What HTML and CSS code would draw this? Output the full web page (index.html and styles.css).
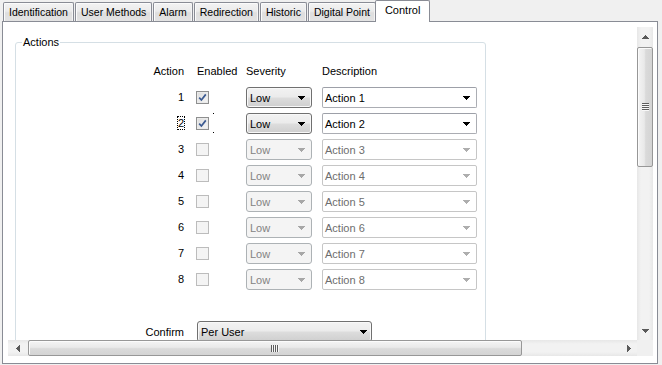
FILE: index.html
```html
<!DOCTYPE html>
<html>
<head>
<meta charset="utf-8">
<link rel="stylesheet" href="styles.css">
</head>
<body>
<div class="tabs">
  <div class="tab">Identification</div>
  <div class="tab">User Methods</div>
  <div class="tab">Alarm</div>
  <div class="tab">Redirection</div>
  <div class="tab">Historic</div>
  <div class="tab">Digital Point</div>
  <div class="tab active">Control</div>
</div>
<div class="panel">
  <div class="viewport">
    <div class="content">
      <fieldset class="group">
        <legend>Actions</legend>
        <div class="grid">
          <div class="hdr num">Action</div>
          <div class="hdr en">Enabled</div>
          <div class="hdr">Severity</div>
          <div class="hdr">Description</div>

          <div class="num">1</div>
          <div class="cbcell"><span class="cb on"><svg width="11" height="11" viewBox="0 0 11 11"><path d="M2.2 5.6 L4.4 8 L8.8 2.4" fill="none" stroke="#3b5a91" stroke-width="1.7"/></svg></span></div>
          <div class="combo sev"><span class="val">Low</span><svg class="arr" width="7" height="4" viewBox="0 0 7 4"><path d="M0 0h7v1h-1v1h-1v1h-1v1h-1v-1h-1v-1h-1v-1h-1z"/></svg></div>
          <div class="combo desc"><span class="val">Action 1</span><svg class="arr" width="7" height="4" viewBox="0 0 7 4"><path d="M0 0h7v1h-1v1h-1v1h-1v1h-1v-1h-1v-1h-1v-1h-1z"/></svg></div>

          <div class="num"><span class="focus">2</span></div>
          <div class="cbcell"><span class="cb on"><svg width="11" height="11" viewBox="0 0 11 11"><path d="M2.2 5.6 L4.4 8 L8.8 2.4" fill="none" stroke="#3b5a91" stroke-width="1.7"/></svg></span><span class="dots"></span></div>
          <div class="combo sev"><span class="val">Low</span><svg class="arr" width="7" height="4" viewBox="0 0 7 4"><path d="M0 0h7v1h-1v1h-1v1h-1v1h-1v-1h-1v-1h-1v-1h-1z"/></svg></div>
          <div class="combo desc"><span class="val">Action 2</span><svg class="arr" width="7" height="4" viewBox="0 0 7 4"><path d="M0 0h7v1h-1v1h-1v1h-1v1h-1v-1h-1v-1h-1v-1h-1z"/></svg></div>

          <div class="num">3</div>
          <div class="cbcell"><span class="cb dis"></span></div>
          <div class="combo sev dis"><span class="val">Low</span><svg class="arr" width="7" height="4" viewBox="0 0 7 4"><path d="M0 0h7v1h-1v1h-1v1h-1v1h-1v-1h-1v-1h-1v-1h-1z"/></svg></div>
          <div class="combo desc dis"><span class="val">Action 3</span><svg class="arr" width="7" height="4" viewBox="0 0 7 4"><path d="M0 0h7v1h-1v1h-1v1h-1v1h-1v-1h-1v-1h-1v-1h-1z"/></svg></div>

          <div class="num">4</div>
          <div class="cbcell"><span class="cb dis"></span></div>
          <div class="combo sev dis"><span class="val">Low</span><svg class="arr" width="7" height="4" viewBox="0 0 7 4"><path d="M0 0h7v1h-1v1h-1v1h-1v1h-1v-1h-1v-1h-1v-1h-1z"/></svg></div>
          <div class="combo desc dis"><span class="val">Action 4</span><svg class="arr" width="7" height="4" viewBox="0 0 7 4"><path d="M0 0h7v1h-1v1h-1v1h-1v1h-1v-1h-1v-1h-1v-1h-1z"/></svg></div>

          <div class="num">5</div>
          <div class="cbcell"><span class="cb dis"></span></div>
          <div class="combo sev dis"><span class="val">Low</span><svg class="arr" width="7" height="4" viewBox="0 0 7 4"><path d="M0 0h7v1h-1v1h-1v1h-1v1h-1v-1h-1v-1h-1v-1h-1z"/></svg></div>
          <div class="combo desc dis"><span class="val">Action 5</span><svg class="arr" width="7" height="4" viewBox="0 0 7 4"><path d="M0 0h7v1h-1v1h-1v1h-1v1h-1v-1h-1v-1h-1v-1h-1z"/></svg></div>

          <div class="num">6</div>
          <div class="cbcell"><span class="cb dis"></span></div>
          <div class="combo sev dis"><span class="val">Low</span><svg class="arr" width="7" height="4" viewBox="0 0 7 4"><path d="M0 0h7v1h-1v1h-1v1h-1v1h-1v-1h-1v-1h-1v-1h-1z"/></svg></div>
          <div class="combo desc dis"><span class="val">Action 6</span><svg class="arr" width="7" height="4" viewBox="0 0 7 4"><path d="M0 0h7v1h-1v1h-1v1h-1v1h-1v-1h-1v-1h-1v-1h-1z"/></svg></div>

          <div class="num">7</div>
          <div class="cbcell"><span class="cb dis"></span></div>
          <div class="combo sev dis"><span class="val">Low</span><svg class="arr" width="7" height="4" viewBox="0 0 7 4"><path d="M0 0h7v1h-1v1h-1v1h-1v1h-1v-1h-1v-1h-1v-1h-1z"/></svg></div>
          <div class="combo desc dis"><span class="val">Action 7</span><svg class="arr" width="7" height="4" viewBox="0 0 7 4"><path d="M0 0h7v1h-1v1h-1v1h-1v1h-1v-1h-1v-1h-1v-1h-1z"/></svg></div>

          <div class="num">8</div>
          <div class="cbcell"><span class="cb dis"></span></div>
          <div class="combo sev dis"><span class="val">Low</span><svg class="arr" width="7" height="4" viewBox="0 0 7 4"><path d="M0 0h7v1h-1v1h-1v1h-1v1h-1v-1h-1v-1h-1v-1h-1z"/></svg></div>
          <div class="combo desc dis"><span class="val">Action 8</span><svg class="arr" width="7" height="4" viewBox="0 0 7 4"><path d="M0 0h7v1h-1v1h-1v1h-1v1h-1v-1h-1v-1h-1v-1h-1z"/></svg></div>
        </div>
        <div class="confirm">
          <div class="num">Confirm</div>
          <div class="combo sev wide"><span class="val">Per User</span><svg class="arr" width="7" height="4" viewBox="0 0 7 4"><path d="M0 0h7v1h-1v1h-1v1h-1v1h-1v-1h-1v-1h-1v-1h-1z"/></svg></div>
        </div>
      </fieldset>
    </div>
    <div class="vscroll">
      <div class="sbtn up"><svg width="7" height="4" viewBox="0 0 7 4"><path d="M3 0h1v1h1v1h1v1h1v1h-7v-1h1v-1h1v-1h1z"/></svg></div>
      <div class="vthumb"><span class="vgrip"></span></div>
      <div class="strack"></div>
      <div class="sbtn down"><svg width="7" height="4" viewBox="0 0 7 4"><path d="M0 0h7v1h-1v1h-1v1h-1v1h-1v-1h-1v-1h-1v-1h-1z"/></svg></div>
    </div>
    <div class="hscroll">
      <div class="sbtn left"><svg width="4" height="7" viewBox="0 0 4 7"><path d="M3 0h1v7h-1v-1h-1v-1h-1v-1h-1v-1h1v-1h1v-1h1z"/></svg></div>
      <div class="hthumb"><span class="hgrip"></span></div>
      <div class="strack"></div>
      <div class="sbtn right"><svg width="4" height="7" viewBox="0 0 4 7"><path d="M0 0h1v1h1v1h1v1h1v1h-1v1h-1v1h-1v1h-1z"/></svg></div>
    </div>
    <div class="corner"></div>
  </div>
</div>
</body>
</html>
```
FILE: styles.css
```css
html, body {
  margin: 0;
  padding: 0;
}
body {
  background: #f0f0f0;
  font-family: "Liberation Sans", Arial, sans-serif;
  font-size: 11px;
  color: #000;
  width: 662px;
  height: 365px;
  overflow: hidden;
}

/* Tabs */
.tabs {
  display: flex;
  align-items: flex-end;
  height: 22px;
  padding-left: 3px;
  margin-bottom: -1px;
  position: relative;
  z-index: 1;
}
.tab {
  box-sizing: border-box;
  height: 19px;
  margin-bottom: 1px;
  margin-right: 1px;
  padding: 0 5px;
  display: flex;
  align-items: center;
  border: 1px solid #898c95;
  border-bottom: none;
  border-radius: 2px 2px 0 0;
  background: linear-gradient(#f3f3f3, #ebebeb 45%, #dedede 55%, #e3e3e3);
  box-shadow: inset 1px 1px 0 #fbfbfb, inset -1px 0 0 #f4f4f4;
  white-space: nowrap;
  font-size: 10.5px;
}
.tab.active {
  height: 22px;
  margin-bottom: 0;
  margin-left: -2px;
  padding: 0 9px 3px;
  background: #fff;
  box-shadow: none;
  font-size: 11px;
}

/* Panel */
.panel {
  box-sizing: border-box;
  margin-left: 2px;
  width: 656px;
  height: 343px;
  border: 1px solid #898c95;
  background: #fff;
  padding: 5px 4px 7px 5px;
}
.viewport {
  height: 100%;
  display: grid;
  grid-template-columns: 1fr 16px;
  grid-template-rows: 1fr 16px;
}
.content {
  overflow: hidden;
  background: #fff;
  min-width: 0;
  min-height: 0;
}

/* Group box */
.group {
  box-sizing: border-box;
  margin: 9px 0 0 7px;
  width: 471px;
  height: 420px;
  padding: 0;
  border: 1px solid #d5dfe5;
  border-radius: 3px;
  min-width: 0;
}
.group legend {
  margin-left: 6px;
  padding: 0 1px;
  line-height: 13px;
}

.grid {
  margin-top: 9px;
  display: grid;
  grid-template-columns: 168px 62px 76px 155px;
  grid-auto-rows: 26px;
  align-items: center;
}
.num {
  text-align: right;
}
.hdr.en {
  padding-left: 13px;
}
.focus {
  outline: 1px dotted #000;
  outline-offset: 0;
}

/* Checkboxes */
.cbcell {
  padding-left: 12px;
  height: 26px;
  display: flex;
  align-items: center;
  position: relative;
}
.cb {
  box-sizing: border-box;
  width: 13px;
  height: 13px;
  display: flex;
  align-items: center;
  justify-content: center;
}
.cb.on {
  border: 1px solid #8e8f8f;
  background: linear-gradient(135deg, #dcdcdc, #f6f6f6);
  box-shadow: inset 0 0 0 1px #eaeaea;
}
.cb.dis {
  border: 1px solid #bcbcbc;
  background: #f4f4f4;
}
.dots {
  position: absolute;
  left: 29px;
  top: 3px;
  width: 1px;
  height: 1px;
  background: #000;
  box-shadow: 0 19px 0 #000;
}

/* Combos */
.combo {
  box-sizing: border-box;
  height: 21px;
  align-self: start;
  margin-top: 3px;
  display: flex;
  align-items: center;
  white-space: nowrap;
}
.combo .val {
  flex: 1;
}
.combo .arr {
  fill: #000;
}
.sev {
  width: 66px;
  padding-left: 3px;
  border: 1px solid #707070;
  border-radius: 3px;
  background: linear-gradient(#f2f2f2, #ebebeb 48%, #dddddd 52%, #cfcfcf);
  box-shadow: inset 0 0 0 1px #f8f8f8;
}
.sev .arr {
  margin-right: 6px;
}
.sev.dis {
  border-color: #adb2b5;
  background: #f4f4f4;
  box-shadow: none;
  color: #838383;
}
.sev.dis .arr {
  fill: #a7a7a7;
}
.desc {
  width: 155px;
  padding-left: 2px;
  border: 1px solid #abadb3;
  border-top-color: #9da0a8;
  border-radius: 2px;
  background: #fff;
}
.desc .arr {
  margin-right: 6px;
}
.desc.dis {
  border-color: #c6c6c6;
  color: #6d6d6d;
}
.desc.dis .arr {
  fill: #aeaeae;
}

.confirm {
  margin-top: 29px;
  display: flex;
  align-items: center;
}
.confirm .num {
  width: 168px;
}
.confirm .wide {
  width: 175px;
  margin: 0 0 0 13px;
}
.confirm .wide .arr {
  margin-right: 4px;
}

/* Scrollbars */
.vscroll {
  display: flex;
  flex-direction: column;
  background: linear-gradient(to right, #e7e7e7, #f2f2f2 25%, #f2f2f2 75%, #e7e7e7);
}
.hscroll {
  display: flex;
  background: linear-gradient(#e7e7e7, #f2f2f2 25%, #f2f2f2 75%, #e7e7e7);
}
.corner {
  background: #f0f0f0;
}
.sbtn {
  display: flex;
  align-items: center;
  justify-content: center;
  fill: #5a5a5a;
}
.vscroll .sbtn.up {
  height: 19px;
}
.vscroll .sbtn.down {
  height: 18px;
}
.hscroll .sbtn.left {
  width: 19px;
}
.hscroll .sbtn.right {
  width: 17px;
}
.strack {
  flex: 1;
}
.vthumb {
  box-sizing: border-box;
  height: 120px;
  margin-top: 1px;
  border: 1px solid #979797;
  border-radius: 2px;
  background: linear-gradient(to right, #f4f4f4, #e9e9e9 45%, #dadada 55%, #d4d4d4);
  box-shadow: inset 1px 1px 0 #fbfbfb;
  display: flex;
  align-items: center;
  justify-content: center;
}
.vgrip {
  width: 7px;
  height: 8px;
  background: repeating-linear-gradient(#5e5e5e 0 1px, #f8f8f8 1px 2px);
}
.hthumb {
  box-sizing: border-box;
  width: 494px;
  margin-left: 1px;
  border: 1px solid #979797;
  border-radius: 2px;
  background: linear-gradient(#f4f4f4, #e9e9e9 45%, #dadada 55%, #d4d4d4);
  box-shadow: inset 1px 1px 0 #fbfbfb;
  display: flex;
  align-items: center;
  justify-content: center;
}
.hgrip {
  width: 8px;
  height: 7px;
  background: repeating-linear-gradient(to right, #5e5e5e 0 1px, #f8f8f8 1px 2px);
}
```
